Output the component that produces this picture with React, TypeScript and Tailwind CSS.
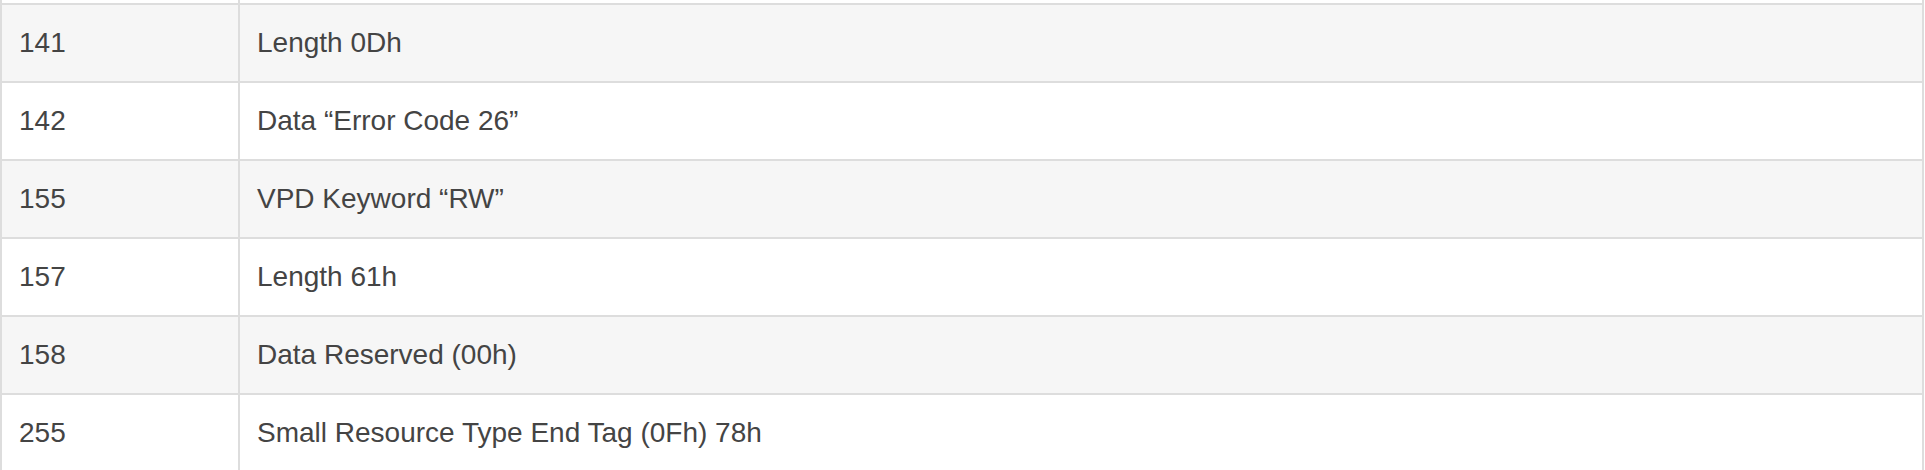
const rows = [
  ["141", "Length 0Dh"],
  ["142", "Data \u201cError Code 26\u201d"],
  ["155", "VPD Keyword \u201cRW\u201d"],
  ["157", "Length 61h"],
  ["158", "Data Reserved (00h)"],
  ["255", "Small Resource Type End Tag (0Fh) 78h"],
];

export default function App() {
  return (
    <div className="w-[1925px] h-[470px] overflow-hidden bg-white font-['Liberation_Sans',Arial,sans-serif] text-[28px] text-[#444]">
      <div className="w-[1924px] border-x-2 border-[#dddddd]">
        {/* tail of the row above */}
        <div className="flex h-[3px]">
          <div className="w-[238px] shrink-0 border-r-2 border-[#dddddd]" />
          <div className="flex-1" />
        </div>
        {rows.map(([offset, item], i) => (
          <div
            key={offset}
            className={`flex h-[78px] border-t-2 border-[#dddddd] ${i % 2 === 0 ? "bg-[#f6f6f6]" : "bg-white"}`}
          >
            <div className="w-[238px] shrink-0 border-r-2 border-[#dddddd] flex items-center pl-[17px]">{offset}</div>
            <div className="flex-1 flex items-center pl-[17px]">{item}</div>
          </div>
        ))}
      </div>
    </div>
  );
}
